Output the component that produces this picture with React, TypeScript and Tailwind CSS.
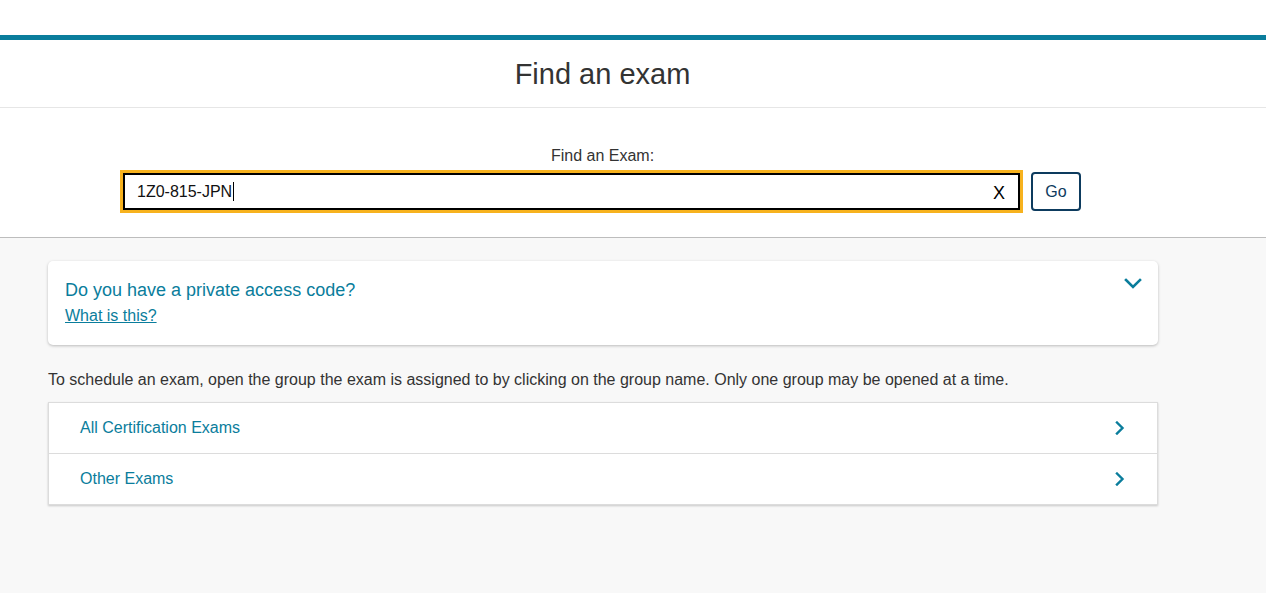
import React from "react";

const ChevronDown = () => (
  <svg width="18" height="12" viewBox="0 0 18 12" fill="none" stroke="#0a7d9c" strokeWidth="2.6" strokeLinecap="square">
    <path d="M2 2 L9 9 L16 2" />
  </svg>
);
const ChevronRight = () => (
  <svg width="10" height="14" viewBox="0 0 10 14" fill="none" stroke="#0a7d9c" strokeWidth="2.4" strokeLinecap="square">
    <path d="M2 1.5 L7.5 7 L2 12.5" />
  </svg>
);

export default function App() {
  return (
    <div className="min-h-[593px] bg-[#f8f8f8] text-[#333]" style={{ fontFamily: '"Liberation Sans", Arial, sans-serif' }}>
      <div className="bg-white h-[35px]" />
      <div className="h-[5px] bg-[#0a7d9c]" />
      <div className="bg-white h-[68px] border-b border-[#e6e6e6]">
        <div className="w-[1205px] h-full flex items-center justify-center">
          <h1 className="text-[29px] text-[#333] leading-none mt-[2px]">Find an exam</h1>
        </div>
      </div>
      <div className="bg-white h-[130px] border-b border-[#bdbdbd]">
        <div className="w-[1205px] flex flex-col items-center pt-[39px]">
          <div className="text-[16px] leading-[18px] text-[#333]">Find an Exam:</div>
          <div className="flex items-center gap-[8px] mt-[5px] mr-[4px]">
            <div className="w-[903px] h-[43px] border-[3px] border-[#f7b21e]">
              <div className="h-full border-[2px] border-black flex items-center pl-[12px] pr-[13px]">
                <span className="text-[16px] text-[#111]">1Z0-815-JPN</span>
                <span className="w-[1px] h-[19px] bg-black ml-[1px]" />
                <span className="ml-auto text-[18px] text-black mt-[4px]">X</span>
              </div>
            </div>
            <button className="w-[50px] h-[39px] border-[2px] border-[#0d3b5e] rounded-[4px] bg-white text-[16px] text-[#0d3b5e]">Go</button>
          </div>
        </div>
      </div>
      <div className="pl-[48px] w-[1158px]">
        <div className="mt-[23px] bg-white rounded-[5px] shadow-[0_1px_3px_rgba(0,0,0,0.25)] h-[84px] flex justify-between pl-[17px] pr-[16px] pt-[18px]">
          <div>
            <div className="text-[18px] leading-[22px] text-[#0a7d9c]">Do you have a private access code?</div>
            <div className="text-[16px] leading-[20px] text-[#0a7d9c] underline mt-[5px]">What is this?</div>
          </div>
          <div className="-mt-[1px]"><ChevronDown /></div>
        </div>
        <p className="mt-[25px] text-[16px] leading-[20px] text-[#333]">
          To schedule an exam, open the group the exam is assigned to by clicking on the group name. Only one group may be opened at a time.
        </p>
        <div className="mt-[12px] bg-white border border-[#dcdcdc] shadow-[0_1px_2px_rgba(0,0,0,0.2)]">
          <div className="h-[51px] flex items-center justify-between pl-[31px] pr-[32px] border-b border-[#dcdcdc]">
            <span className="text-[16px] text-[#0a7d9c]">All Certification Exams</span>
            <ChevronRight />
          </div>
          <div className="h-[50px] flex items-center justify-between pl-[31px] pr-[32px]">
            <span className="text-[16px] text-[#0a7d9c]">Other Exams</span>
            <ChevronRight />
          </div>
        </div>
      </div>
    </div>
  );
}
